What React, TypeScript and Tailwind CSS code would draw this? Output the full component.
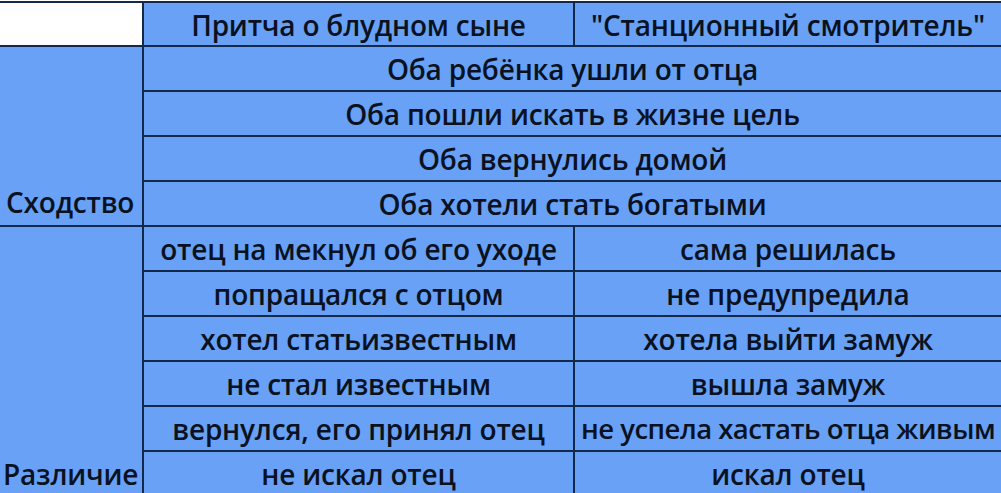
import React from "react";

const cell = "bg-[#68a1f5] flex items-center justify-center pt-[1px] whitespace-nowrap overflow-hidden";

export default function App() {
  const diffs: [string, string][] = [
    ["отец на мекнул об его уходе", "сама решилась"],
    ["попращался с отцом", "не предупредила"],
    ["хотел статьизвестным", "хотела выйти замуж"],
    ["не стал известным", "вышла замуж"],
    ["вернулся, его принял отец", "не успела хастать отца живым"],
    ["не искал отец", "искал отец"],
  ];
  const sims = [
    "Оба ребёнка ушли от отца",
    "Оба пошли искать в жизне цель",
    "Оба вернулись домой",
    "Оба хотели стать богатыми",
  ];
  return (
    <div
      className="w-[1001px] h-[493px] overflow-hidden bg-white pt-[1px] text-[#0a1222] text-[28px] font-semibold tracking-[-0.2px]"
      style={{ fontFamily: "'Open Sans', 'Noto Sans', sans-serif" }}
    >
      <div className="grid grid-cols-[142px_429px_1fr] grid-rows-[42px_repeat(10,43px)] gap-[2px] bg-[#13294a] pt-[2px]">
        <div className="bg-white" />
        <div className={cell}>Притча о блудном сыне</div>
        <div className={cell}>"Станционный смотритель"</div>

        <div className="bg-[#68a1f5] row-span-4 flex items-end pl-[6px] pb-[2px]">Сходство</div>
        {sims.map((s) => (
          <div key={s} className={`${cell} col-span-2`}>
            {s}
          </div>
        ))}

        <div className="bg-[#68a1f5] row-span-6 flex items-end pl-[3px] pb-0">Различие</div>
        {diffs.map(([a, b]) => (
          <React.Fragment key={a}>
            <div className={cell}>{a}</div>
            <div className={b.length > 24 ? `${cell} tracking-[-0.5px] text-[27.5px]` : cell}>{b}</div>
          </React.Fragment>
        ))}
      </div>
    </div>
  );
}
